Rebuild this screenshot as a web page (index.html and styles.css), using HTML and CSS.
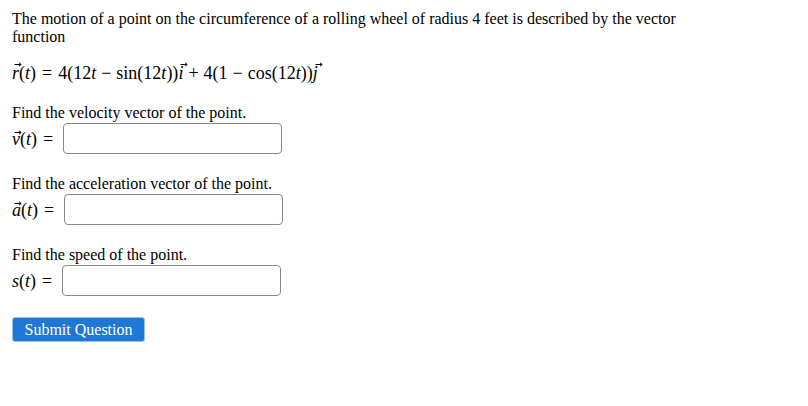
FILE: index.html
```html
<!DOCTYPE html>
<html>
<head>
<meta charset="utf-8">
<link rel="stylesheet" href="styles.css">
</head>
<body>
<div class="page">
  <p class="intro">The motion of a point on the circumference of a rolling wheel of radius 4 feet is described by the vector function</p>
  <p class="math eq"><span class="vec"><i>r</i><svg class="arr" viewBox="0 0 8 5"><path d="M0.5 2.5H7M5 0.8L7.2 2.5L5 4.2"/></svg></span>(<i>t</i>)<span class="op">=</span>4(12<i>t</i><span class="bin">−</span>sin(12<i>t</i>))<span class="vec"><i>i</i><svg class="arr" viewBox="0 0 8 5"><path d="M0.5 2.5H7M5 0.8L7.2 2.5L5 4.2"/></svg></span><span class="bin">+</span>4(1<span class="bin">−</span>cos(12<i>t</i>))<span class="vec"><i>j</i><svg class="arr" viewBox="0 0 8 5"><path d="M0.5 2.5H7M5 0.8L7.2 2.5L5 4.2"/></svg></span></p>

  <div class="q">
    <p class="prompt">Find the velocity vector of the point.</p>
    <div class="row"><span class="math lbl"><span class="vec"><i>v</i><svg class="arr" viewBox="0 0 8 5"><path d="M0.5 2.5H7M5 0.8L7.2 2.5L5 4.2"/></svg></span>(<i>t</i>)<span class="op">=</span></span><input class="ans" type="text"></div>
  </div>

  <div class="q">
    <p class="prompt">Find the acceleration vector of the point.</p>
    <div class="row"><span class="math lbl"><span class="vec"><i>a</i><svg class="arr" viewBox="0 0 8 5"><path d="M0.5 2.5H7M5 0.8L7.2 2.5L5 4.2"/></svg></span>(<i>t</i>)<span class="op">=</span></span><input class="ans" type="text"></div>
  </div>

  <div class="q">
    <p class="prompt">Find the speed of the point.</p>
    <div class="row"><span class="math lbl"><i>s</i>(<i>t</i>)<span class="op">=</span></span><input class="ans" type="text"></div>
  </div>

  <button class="submit" type="button">Submit Question</button>
</div>
</body>
</html>
```

FILE: styles.css
```css
html, body {
  margin: 0;
  padding: 0;
  background: #fff;
}
body {
  font-family: "Liberation Serif", "Times New Roman", serif;
  font-size: 16px;
  color: #000;
}
.page {
  padding: 10px 12px;
  width: 680px;
}
p {
  margin: 0;
}
.intro {
  line-height: 18px;
}
.math {
  font-family: "Liberation Serif", "DejaVu Serif", serif;
  font-size: 18px;
}
.math i {
  font-style: italic;
}
.eq {
  margin-top: 15px;
  line-height: 24px;
}
.op {
  padding: 0 6px;
}
.bin {
  padding: 0 5px;
}
.vec {
  position: relative;
  display: inline-block;
}
.arr {
  position: absolute;
  left: 2px;
  top: 1px;
  width: 8px;
  height: 5px;
  fill: none;
  stroke: #000;
  stroke-width: 1;
}
.q {
  margin-top: 19px;
}
.q + .q {
  margin-top: 21px;
}
.prompt {
  line-height: 18px;
}
.row {
  display: flex;
  align-items: center;
  gap: 4px;
  margin-top: 1px;
}
.lbl {
  line-height: 20px;
}
.ans {
  width: 219px;
  height: 31px;
  box-sizing: border-box;
  border: 1px solid #8a8a8a;
  border-radius: 4px;
  margin: 0;
  padding: 2px 6px;
  font-size: 15px;
}
.submit {
  margin-top: 21px;
  display: block;
  background: #1f78d6;
  color: #fff;
  border: 1px solid #9fbde0;
  border-radius: 3px;
  font-family: "Liberation Serif", "Times New Roman", serif;
  font-size: 16px;
  width: 133px;
  height: 25px;
  padding: 0;
}
```
